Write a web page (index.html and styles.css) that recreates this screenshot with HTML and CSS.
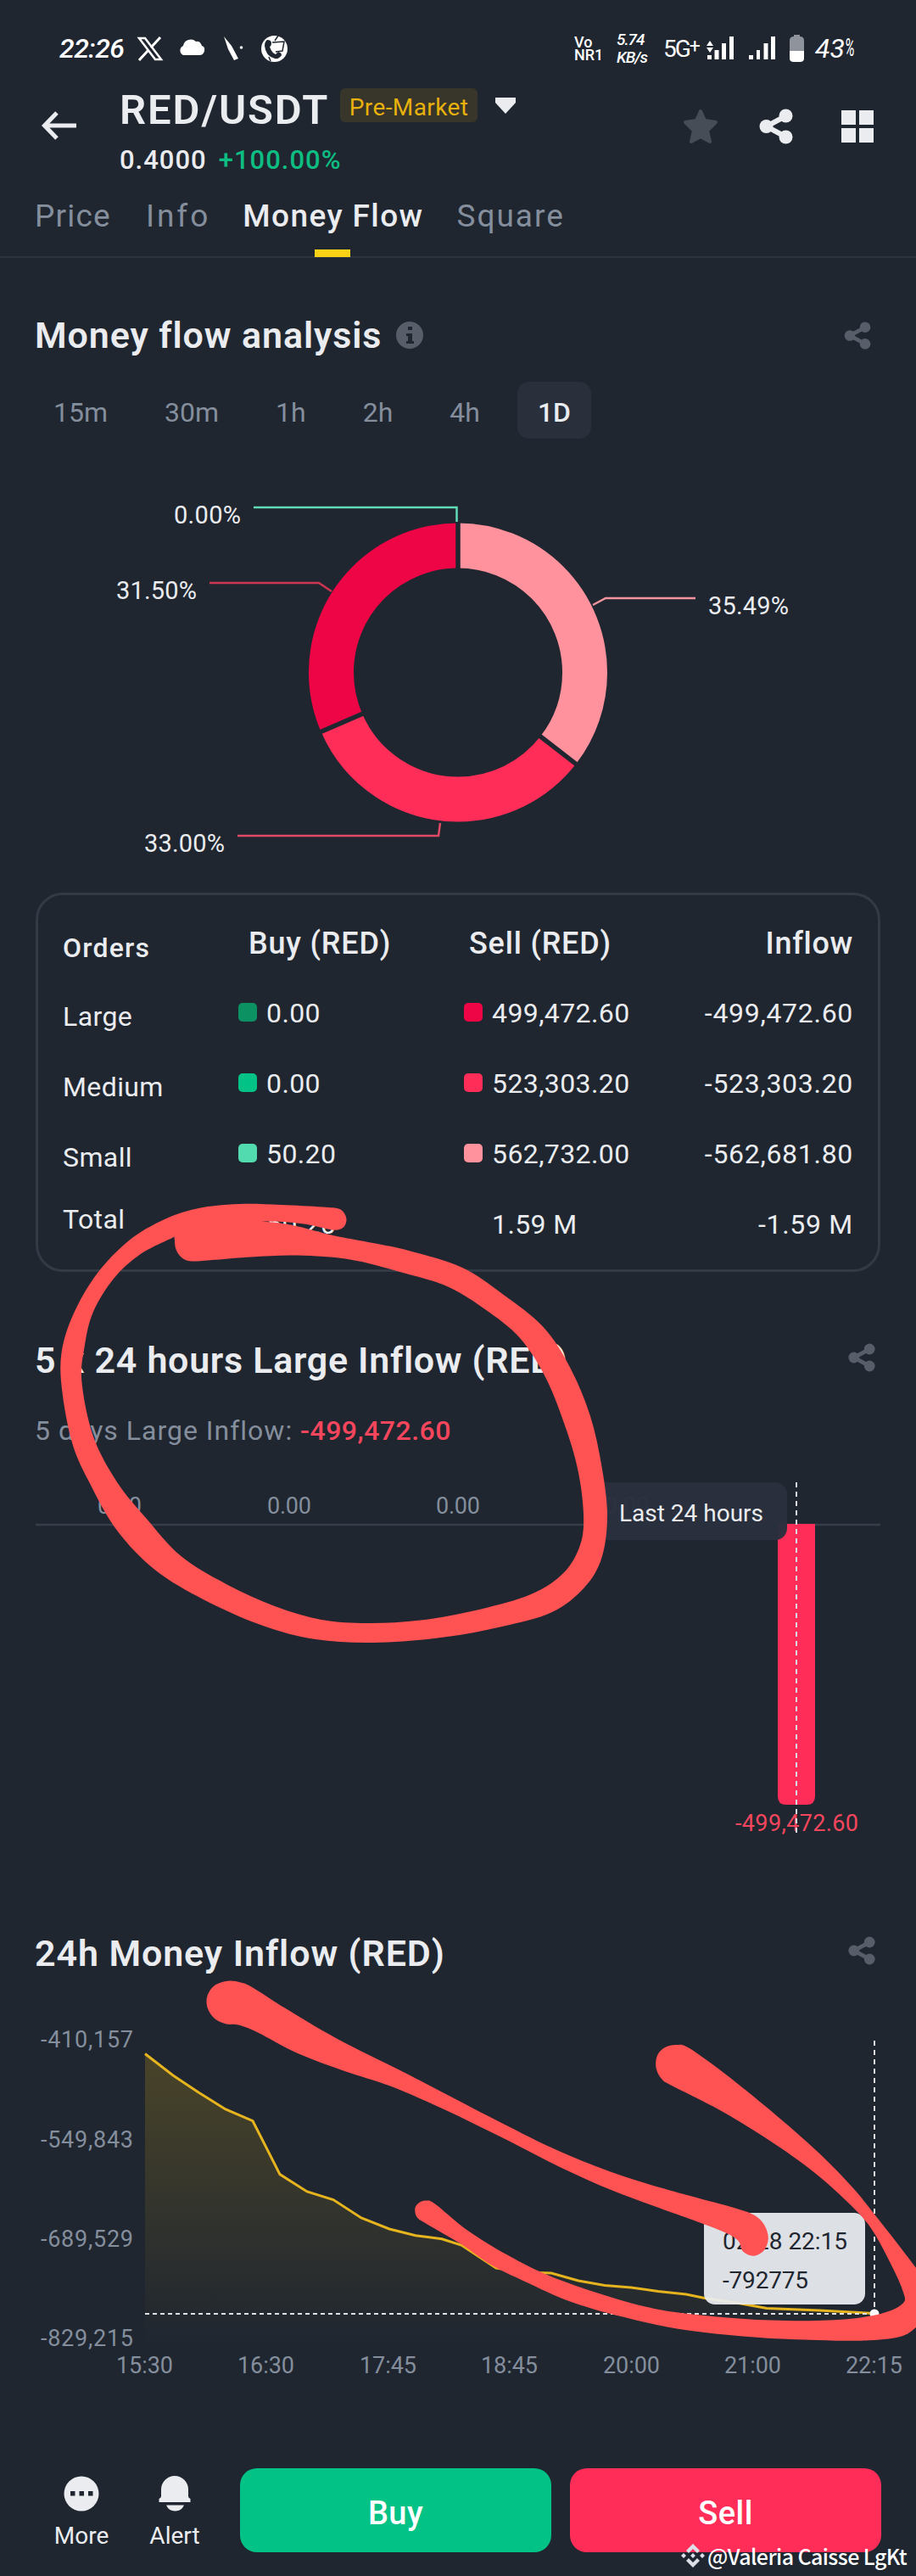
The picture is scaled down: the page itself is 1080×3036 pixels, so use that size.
FILE: index.html
```html
<!DOCTYPE html>
<html lang="en">
<head>
  <meta charset="UTF-8">
  <meta name="viewport" content="width=device-width, initial-scale=1.0">
  <title>RED/USDT | Money Flow</title>
  <link rel="stylesheet" href="styles.css">
</head>
<body>
  <svg width="0" height="0" class="defs">
    <symbol id="share" viewBox="0 0 40 42">
      <path d="M31 9 8.500 21 31 33" fill="none" stroke="currentColor" stroke-width="6"/>
      <circle cx="31.500" cy="8.500" r="8"/><circle cx="8.500" cy="21" r="8"/><circle cx="31.500" cy="33.500" r="8"/>
    </symbol>
  </svg>

  <div class="statusbar">
    <span class="clock">22:26</span>
    <svg class="status-left" width="180" height="34" viewBox="160 40 180 34">
      <g fill="none" stroke="#fff">
        <path d="M164 45h7l19 25h-7z" stroke-width="2.500"/>
        <path d="M189 44l-11 12M175 59l-11 12" stroke-width="3"/>
      </g>
      <path d="M216 65a6 6 0 0 1 0-11 9 9 0 0 1 15-5q5-1 7 5 4 1 3 6-1 5-6 5z" fill="#fff"/>
      <path d="M264 43l9 11 8 15-5 2-7-13z" fill="#fff"/><circle cx="284.500" cy="56" r="1.800" fill="#fff"/>
      <circle cx="323.500" cy="57.500" r="15.500" fill="#fff"/>
      <path d="M315 47q5 0 5 4 0 3-2 4 2 7 7 9l3-3q4 1 4 4-3 5-8 4-11-3-12-15 0-5 3-7z" fill="#1f2630"/>
      <path d="M321 50l14-1-2 11-8 1M324 48l4-6M317 67l2 5" fill="none" stroke="#1f2630" stroke-width="1.500"/>
    </svg>
    <div class="tiny volte"><span>Vo</span><span>NR1</span></div>
    <div class="tiny speed"><span>5.74</span><span>KB/s</span></div>
    <span class="net">5G<sup>+</sup></span>
    <svg class="bars" width="84" height="34" viewBox="832 40 84 34" fill="#fff">
      <path d="M833 54l4-6 4 6zM833 56h8l-4 6zM834 65h5v5h-5zM842.500 59h5v11h-5zM851 51h5v19h-5zM860 43h5v27h-5z"/>
      <path d="M883 65h5v5h-5zM892 59h4v11h-4zM900.500 51h5v19h-5zM909 43h5v27h-5z"/>
    </svg>
    <svg class="battery" width="18" height="34" viewBox="0 0 18 34">
      <path d="M0 8q0-5 5-5V1h7v2q5 0 5 5v12H0z" fill="#8f939b"/>
      <path d="M0 20h17v9q0 4-5 4H5q-5 0-5-4z" fill="#fff"/>
    </svg>
    <span class="percent">43<small>%</small></span>
  </div>

  <header class="topbar">
    <svg class="back" width="42" height="34" viewBox="0 0 42 34" fill="none" stroke="#eaecef" stroke-width="5">
      <path d="M3 17h38M18 2 3.500 17 18 32"/>
    </svg>
    <div class="pair">
      <div class="pair-line">
        <h1>RED/USDT</h1>
        <span class="badge">Pre-Market</span>
        <svg class="caret" width="26" height="20" viewBox="0 0 26 20"><path d="M1 1h24v6L13 20 1 7z" fill="#eaecef"/></svg>
      </div>
      <div class="quote"><span>0.4000</span><span class="up">+100.00%</span></div>
    </div>
    <div class="actions">
      <svg width="42" height="42" viewBox="0 0 42 42"><path d="M21 3l5 11 13 2-10 10 3 13-11-6-11 6 3-13L3 16l13-2z" fill="#474d57" stroke="#474d57" stroke-width="4" stroke-linejoin="round"/></svg>
      <svg class="share-big" width="40" height="42"><use href="#share"/></svg>
      <svg width="38" height="38" viewBox="0 0 38 38" fill="#eaecef"><path d="M0 0h17v17H0zM21 0h17v17H21zM0 21h17v17H0zM21 21h17v17H21z"/></svg>
    </div>
  </header>

  <nav class="tabs">
    <a>Price</a>
    <a class="info-tab">Info</a>
    <a class="active">Money Flow</a>
    <a class="square-tab">Square</a>
  </nav>

  <section class="analysis">
    <div class="section-head">
      <h2>Money flow analysis</h2>
      <svg class="info" width="32" height="32" viewBox="0 0 32 32"><circle cx="16" cy="16" r="16" fill="#575e6a"/><path d="M14 6h5v4h-5zM12 14h7v9h2v3h-9v-3h2v-6h-2z" fill="#1f2630"/></svg>
      <svg class="share" width="32" height="33"><use href="#share"/></svg>
    </div>
    <div class="periods">
      <span>15m</span><span>30m</span><span>1h</span><span>2h</span><span>4h</span><span class="active">1D</span>
    </div>
    <svg class="donut" width="1080" height="535" viewBox="0 517 1080 535">
      <g fill="none" stroke-width="53">
        <circle cx="540" cy="792.500" r="149.500" pathLength="100" stroke="#ff929c" stroke-dasharray="35.490 100" transform="rotate(-90 540 792.500)"/>
        <circle cx="540" cy="792.500" r="149.500" pathLength="100" stroke="#ff2d58" stroke-dasharray="33.010 100" stroke-dashoffset="-35.490" transform="rotate(-90 540 792.500)"/>
        <circle cx="540" cy="792.500" r="149.500" pathLength="100" stroke="#ee0546" stroke-dasharray="31.500 100" stroke-dashoffset="-68.500" transform="rotate(-90 540 792.500)"/>
      </g>
      <path d="M540 792.500V610M540 792.500 684.200 904.300M540 792.500 372.500 865" stroke="#1f2630" stroke-width="5.500"/>
      <g fill="none" stroke-width="2.500">
        <path d="M299 598H538.500V615" stroke="#5fdcb4"/>
        <path d="M247 687H376L391 697" stroke="#cf3450"/>
        <path d="M280 985H517L519 970" stroke="#e04a66"/>
        <path d="M820 705H714L699 713" stroke="#f5949f"/>
      </g>
      <g class="donut-label">
        <text x="205" y="617" textLength="79">0.00%</text>
        <text x="137" y="706" textLength="95">31.50%</text>
        <text x="835" y="724" textLength="95">35.49%</text>
        <text x="170" y="1004" textLength="95">33.00%</text>
      </g>
    </svg>

    <div class="orders">
      <div class="row head"><span class="name">Orders</span><span>Buy (RED)</span><span>Sell (RED)</span><span>Inflow</span></div>
      <div class="row"><span class="name">Large</span><span><i class="buy-l"></i>0.00</span><span><i class="sell-l"></i>499,472.60</span><span>-499,472.60</span></div>
      <div class="row"><span class="name">Medium</span><span><i class="buy-m"></i>0.00</span><span><i class="sell-m"></i>523,303.20</span><span>-523,303.20</span></div>
      <div class="row"><span class="name">Small</span><span><i class="buy-s"></i>50.20</span><span><i class="sell-s"></i>562,732.00</span><span>-562,681.80</span></div>
      <div class="row total"><span class="name">Total</span><span><i></i>50.20</span><span><i></i>1.59 M</span><span>-1.59 M</span></div>
    </div>
  </section>

  <section class="large-inflow">
    <div class="section-head">
      <h2>5 x 24 hours Large Inflow (RED)</h2>
      <svg class="share" width="32" height="34"><use href="#share"/></svg>
    </div>
    <p class="summary">5 days Large Inflow: <b>-499,472.60</b></p>
    <svg class="bar-chart" width="1080" height="460" viewBox="0 1730 1080 460">
      <path d="M42 1797H1038" stroke="#363d49" stroke-width="2.500"/>
      <g class="axis">
        <text x="115" y="1784" textLength="52">0.00</text>
        <text x="315" y="1784" textLength="52">0.00</text>
        <text x="514" y="1784" textLength="52">0.00</text>
        <text x="713" y="1784" textLength="52">0.00</text>
      </g>
      <path d="M917 1796h44v321q0 10-10 10h-24q-10 0-10-10z" fill="#ff2d58"/>
      <rect x="700" y="1747" width="228" height="68" rx="14" fill="#29303d" fill-opacity=".97"/>
      <text class="tip" x="730" y="1793" textLength="170">Last 24 hours</text>
      <text class="down" x="867" y="2158" textLength="145">-499,472.60</text>
      <path d="M939 1747V2161" stroke="#d9dbe0" stroke-width="2" stroke-dasharray="6 5"/>
    </svg>
  </section>

  <section class="money-inflow">
    <div class="section-head">
      <h2>24h Money Inflow (RED)</h2>
      <svg class="share" width="32" height="34"><use href="#share"/></svg>
    </div>
    <svg class="line-chart" width="1080" height="500" viewBox="0 2330 1080 500">
      <defs>
        <linearGradient id="fade" x1="0" y1="0" x2="0" y2="1">
          <stop offset="0" stop-color="#f0b90b" stop-opacity=".2"/>
          <stop offset="1" stop-color="#f0b90b" stop-opacity="0"/>
        </linearGradient>
      </defs>
      <path id="area" fill="url(#fade)"/>
      <path id="line" fill="none" stroke="#e6b41e" stroke-width="3"/>
      <g class="axis">
        <text x="48" y="2413" textLength="109">-410,157</text>
        <text x="48" y="2530.500" textLength="109">-549,843</text>
        <text x="48" y="2648" textLength="109">-689,529</text>
        <text x="48" y="2765" textLength="109">-829,215</text>
        <text x="137" y="2797" textLength="67">15:30</text>
        <text x="280" y="2797" textLength="67">16:30</text>
        <text x="424" y="2797" textLength="67">17:45</text>
        <text x="567" y="2797" textLength="67">18:45</text>
        <text x="711" y="2797" textLength="67">20:00</text>
        <text x="854" y="2797" textLength="67">21:00</text>
        <text x="997" y="2797" textLength="67">22:15</text>
      </g>
      <path d="M171 2727H1031" stroke="#dfe1e5" stroke-width="2" stroke-dasharray="5 4"/>
      <path d="M1031 2405V2727" stroke="#dfe1e5" stroke-width="2" stroke-dasharray="6 5"/>
      <circle cx="1031" cy="2727" r="5.500" fill="#fff"/>
      <rect x="830" y="2608" width="190" height="108" rx="13" fill="#eaecef" fill-opacity=".94"/>
      <g class="tip dark">
        <text x="852" y="2651" textLength="147">02-28 22:15</text>
        <text x="852" y="2697" textLength="101">-792775</text>
      </g>
    </svg>
  </section>

  <footer class="bottombar">
    <div class="tool">
      <svg width="42" height="42" viewBox="0 0 42 42"><circle cx="21" cy="21" r="20.500" fill="#eaecef"/><path d="M8 18h5.500v5.500H8zM18.500 18H24v5.500h-5.500zM29 18h5.500v5.500H29z" fill="#1f2630"/></svg>
      <span>More</span>
    </div>
    <div class="tool">
      <svg width="42" height="42" viewBox="0 0 42 42" fill="#eaecef"><path d="M5 16a16 16 0 0 1 32 0v8q0 2 2.500 3v4h-37v-4Q5 26 5 24zM11 34.500h21q-3 7-10.500 7t-10.500-7z"/></svg>
      <span>Alert</span>
    </div>
    <button class="btn buy">Buy</button>
    <button class="btn sell">Sell</button>
  </footer>

  <!-- marker drawing on top of the charts -->
  <svg class="marker" width="1080" height="3036" viewBox="0 0 1080 3036" fill="#ff5252" fill-rule="evenodd">
    <path id="ring"/>
    <path id="slash"/>
    <path id="hook"/>
  </svg>

  <div class="watermark">
    <svg width="28" height="28" viewBox="0 0 28 28" fill="#dcdfe6"><path d="M14 0l8 8-3 3-5-5-5 5-3-3zM14 28l8-8-3-3-5 5-5-5-3 3zM14 11l3 3-3 3-3-3zM3 11l3 3-3 3-3-3zM25 11l3 3-3 3-3-3z"/></svg>
    <span>@Valeria Caisse LgKt</span>
  </div>

  <script>
    const inflow = [[171,2420.5],[204,2446],[234,2466],[266,2486],[298,2499.7],[330,2562.6],[362,2583],[393,2592.5],
      [426,2614],[459,2627],[490,2634.7],[521,2638.8],[544,2646],[585,2673],[617,2678],[650,2679],[682,2688],
      [713,2693.5],[744,2696],[776,2700.5],[809,2704],[832,2708.7],[871,2714.6],[904,2720.5],[966,2723],[1031,2726.5]];
    const linePath = "M" + inflow.map(p => p.join(" ")).join("L");
    document.getElementById("line").setAttribute("d", linePath);
    document.getElementById("area").setAttribute("d", linePath + "V2764H171Z");

    // closed smooth curve through all points
    function smooth(pts) {
      const n = pts.length;
      let d = `M${pts[0][0]} ${pts[0][1]}`;
      for (let i = 0; i < n; i++) {
        const a = pts[(i - 1 + n) % n], b = pts[i], c = pts[(i + 1) % n], e = pts[(i + 2) % n];
        d += `C${b[0] + (c[0] - a[0]) / 6} ${b[1] + (c[1] - a[1]) / 6} ${c[0] - (e[0] - b[0]) / 6} ${c[1] - (e[1] - b[1]) / 6} ${c[0]} ${c[1]}`;
      }
      return d + "Z";
    }

    const ringOuter = [[380,1422.5],[399,1424.5],[406,1430],[408.5,1438],[405.5,1446],[398,1449.5],[389,1449],[362,1443],[335,1440],[308,1439.5],[330,1441.5],[354,1446],[392.6,1456],
      [440,1465],[482,1474],[544,1493.6],[592.4,1525],[640.6,1564],[671.6,1610.7],[695.7,1668],[709.5,1728.6],[716,1785.7],
      [709.5,1835.7],[689,1871],[651,1900],[592,1917],[523.5,1929.6],[441,1936],[372,1932],[310,1916],[241,1885.7],
      [182.5,1850],[137.8,1803.6],[106.8,1750],[86,1703.6],[73.7,1643],[72.3,1596],[86,1550],[113.7,1502],
      [151.5,1462.5],[193,1437.5],[234,1424],[282.4,1419],[330.6,1420]];
    const ringInner = [[205.5,1459],[207,1471],[212,1480],[220,1485.5],[230,1486.5],[245,1485.5],[296,1481.4],[351,1479.6],[413,1484.6],
      [475,1500],[527,1516],[571.7,1543],[613,1577],[644,1625],[668,1685.7],[682,1735.7],[688,1785.7],[684,1821],
      [664.7,1853.6],[627,1878.6],[565,1897],[496,1909.6],[434,1913],[379,1909],[324,1893],[268.6,1868],[213.5,1834],
      [172,1789],[137.8,1746.4],[110,1693],[96.4,1628.6],[99.9,1585.7],[110,1546],[134,1507],[165,1478.6],[203,1459]];
    const slash = [[268.6,2334.7],[284,2336.5],[298,2342.5],[337.5,2367.6],[396,2402],[482,2445.3],[585.5,2499],[661,2536],[737,2565.5],
      [812.8,2587.7],[861,2600.7],[888,2610],[901,2622],[905.8,2637.6],[901,2652],[888.6,2658.7],[876,2653.5],[869,2639.5],
      [843.8,2626.5],[778,2602.5],[723,2582],[661,2554.4],[592,2519.3],[523.5,2486],[461.5,2459],[406.4,2440.9],
      [351,2420],[303,2395],[281,2386.5],[267,2385.5],[253,2379],[244.5,2366],[244.5,2352],[253,2340]];
    const hook = [[792,2458],[780,2450],[773.5,2437],[775,2422.5],[784,2413],[797.6,2410],[812,2413.5],[854,2443.4],[909,2487.8],[964,2536],[1005.6,2578.5],
      [1040,2621],[1080,2672.8],[1100,2700],[1098,2725],[1080,2743],[1061,2754],[1019,2758.6],[964,2757.9],[895.5,2755],
      [813,2746.8],[744,2733],[675,2713.5],[620,2689.4],[578.6,2669],[544,2645],[503,2621],[491.5,2613],[489.5,2602],[495,2595.5],
      [503,2593.5],[513,2597.5],[551,2628.4],[599,2658],[647.5,2682],[709.5,2704],[771.5,2720.9],[840,2730],[909,2734.6],
      [978,2734.6],[1033,2728.3],[1064,2715.3],[1064,2698.7],[1047,2661.7],[1026,2624.7],[999,2595],[957,2558],
      [902,2519.3],[847,2486]];
    document.getElementById("ring").setAttribute("d", smooth(ringOuter) + smooth(ringInner));
    document.getElementById("slash").setAttribute("d", smooth(slash));
    document.getElementById("hook").setAttribute("d", smooth(hook));
  </script>
</body>
</html>
```

FILE: styles.css
```css
* {
  box-sizing: border-box;
}
body {
  position: relative;
  width: 1080px;
  height: 3036px;
  margin: 0;
  overflow: hidden;
  background: #1f2630;
  color: #eaecef;
  font-family: Roboto, "Liberation Sans", sans-serif;
}
svg {
  display: block;
  flex: none;
}
.defs {
  position: absolute;
}

/* status bar */
.statusbar {
  display: flex;
  align-items: center;
  height: 104px;
  padding: 10px 0 0 70px;
  color: #fff;
}
.clock {
  width: 90px;
  font-size: 32px;
  font-style: italic;
  font-weight: 500;
  letter-spacing: -0.5px;
}
.tiny {
  display: flex;
  flex-direction: column;
  font-weight: 500;
  line-height: 1;
}
.volte {
  width: 50px;
  margin-left: 337px;
  font-size: 18px;
  line-height: 15px;
}
.speed {
  width: 55px;
  font-size: 19px;
  font-style: italic;
  line-height: 21px;
  letter-spacing: -1px;
}
.net {
  width: 50px;
  font-size: 28px;
  letter-spacing: -2px;
  white-space: nowrap;
}
.net sup {
  font-size: 23px;
  line-height: 0;
  vertical-align: 5px;
}
.battery {
  margin-left: 15px;
}
.percent {
  display: flex;
  margin-left: 12px;
  font-size: 32px;
  font-style: italic;
  font-weight: 400;
  white-space: nowrap;
}
.percent small {
  font-size: 30px;
  transform: scaleX(.55);
  transform-origin: left;
}

/* header */
.topbar {
  display: flex;
  height: 112px;
  padding-left: 49px;
}
.back {
  margin-top: 27px;
}
.pair {
  margin-left: 49px;
  width: 580px;
}
.pair-line {
  display: flex;
}
h1 {
  margin: -3px 0 0 1px;
  width: 260px;
  font-size: 49px;
  line-height: 58px;
  font-weight: 600;
  letter-spacing: 1.9px;
}
.badge {
  width: 162px;
  height: 40px;
  border-radius: 6px;
  background: #38352b;
  color: #e8b10c;
  font-size: 28px;
  line-height: 45px;
  text-align: center;
  letter-spacing: .4px;
}
.caret {
  margin: 10px 0 0 20px;
}
.quote {
  display: flex;
  gap: 14px;
  margin: 10px 0 0 1px;
  font-size: 31px;
  line-height: 40px;
  font-weight: 500;
  letter-spacing: 1px;
}
.up {
  color: #0ebd82;
}
.actions {
  display: flex;
  gap: 48px;
  padding: 24px 0 0 85px;
}
.actions svg:last-child {
  margin: 2px 0 0 9px;
}
.share-big {
  fill: currentColor;
}

/* tabs */
.tabs {
  display: flex;
  height: 88px;
  padding-left: 41px;
  border-bottom: 2px solid #2d3440;
  color: #848e9c;
  font-size: 37px;
  line-height: 77px;
  letter-spacing: 1.2px;
}
.info-tab {
  margin-left: 41px;
  letter-spacing: 3px;
}
.tabs .active {
  position: relative;
  margin-left: 38px;
  color: #eaecef;
  font-weight: 500;
  letter-spacing: 1.4px;
}
.tabs .active::after {
  content: "";
  position: absolute;
  left: 85px;
  bottom: -1px;
  width: 42px;
  height: 9px;
  background: #fcd116;
}
.square-tab {
  margin-left: 39px;
  letter-spacing: 2px;
}

/* sections */
.section-head {
  display: flex;
  align-items: center;
  padding: 0 48px 0 41px;
  height: 60px;
}
h2 {
  margin: 0;
  font-size: 43px;
  line-height: 60px;
  font-weight: 600;
  letter-spacing: .9px;
}
.info {
  margin-left: 17px;
}
.share {
  margin: -6px 0 0 auto;
  color: #575e6a;
  fill: currentColor;
}
.analysis {
  padding-top: 61px;
}
.analysis .section-head {
  padding-right: 53px;
}
.analysis .share {
  margin-top: 0;
}
.large-inflow h2 {
  letter-spacing: .7px;
}
.periods {
  display: flex;
  gap: 19px;
  height: 67px;
  margin-top: 25px;
  padding-left: 39px;
}
.periods span {
  padding: 0 24px;
  border-radius: 14px;
  color: #848e9c;
  font-size: 32px;
  line-height: 73px;
}
.periods .active {
  margin-left: 1px;
  background: #29303c;
  color: #eaecef;
  font-weight: 500;
}
.donut-label {
  fill: #eaecef;
  font-size: 29px;
}

/* orders table */
.orders {
  height: 447px;
  margin: 0 42px;
  padding: 14px 29px 0;
  border: 3px solid #333a46;
  border-radius: 32px;
}
.row {
  display: grid;
  grid-template-columns: 207px 266px 1fr auto;
  align-items: center;
  height: 83px;
  font-size: 32px;
  letter-spacing: .4px;
}
.row span {
  display: flex;
  align-items: center;
}
.row span:last-child {
  letter-spacing: .7px;
}
.row .name {
  padding-top: 9px;
}
.row i {
  width: 22px;
  height: 22px;
  margin: 0 11px 1px 0;
  border-radius: 5px;
}
.head {
  padding-top: 2px;
  font-size: 36px;
  font-weight: 500;
  letter-spacing: .8px;
}
.head span:nth-child(2) {
  padding-left: 12px;
}
.head span:nth-child(3) {
  padding-left: 6px;
}
.head .name {
  padding-top: 10px;
  font-size: 32px;
  letter-spacing: 1.2px;
}
.total .name {
  padding: 0 0 12px;
}
.buy-l { background: #0c9163; }
.buy-m { background: #02c285; }
.buy-s { background: #51dbaf; }
.sell-l { background: #ee0546; }
.sell-m { background: #ff2d58; }
.sell-s { background: #ff929c; }

/* charts */
.large-inflow {
  padding-top: 74px;
}
.summary {
  height: 97px;
  margin: 0;
  padding-left: 41px;
  color: #848e9c;
  font-size: 32px;
  line-height: 106px;
  letter-spacing: 1px;
}
.summary b {
  color: #f6465d;
  font-weight: 500;
  letter-spacing: .5px;
}
.axis {
  fill: #848e9c;
  font-size: 27px;
}
.tip {
  fill: #eaecef;
  font-size: 28px;
}
.dark {
  fill: #1f2630;
}
.down {
  fill: #f6465d;
  font-size: 27px;
}
.money-inflow {
  padding-top: 82px;
}
.line-chart {
  margin-top: -2px;
}

/* bottom bar */
.bottombar {
  display: flex;
  padding: 79px 41px 0 51px;
}
.tool {
  display: flex;
  flex-direction: column;
  align-items: center;
  width: 90px;
  margin: 9px 20px 0 0;
  font-size: 28px;
  line-height: 40px;
  gap: 9px;
}
.btn {
  width: 367px;
  height: 99px;
  margin-left: 12px;
  border: none;
  border-radius: 20px;
  color: #fff;
  font-family: inherit;
  font-size: 38px;
  font-weight: 500;
  line-height: 107px;
  padding: 0;
  letter-spacing: .5px;
}
.buy {
  background: #02c285;
}
.sell {
  margin-left: 22px;
  background: #ff2d58;
}

.marker {
  position: absolute;
  top: 0;
  left: 0;
}
.watermark {
  position: absolute;
  left: 803px;
  top: 2992px;
  display: flex;
  align-items: center;
  gap: 3px;
  color: #fff;
  font: 500 25px/40px "Noto Sans CJK SC", sans-serif;
  letter-spacing: -.6px;
  white-space: nowrap;
}
```
